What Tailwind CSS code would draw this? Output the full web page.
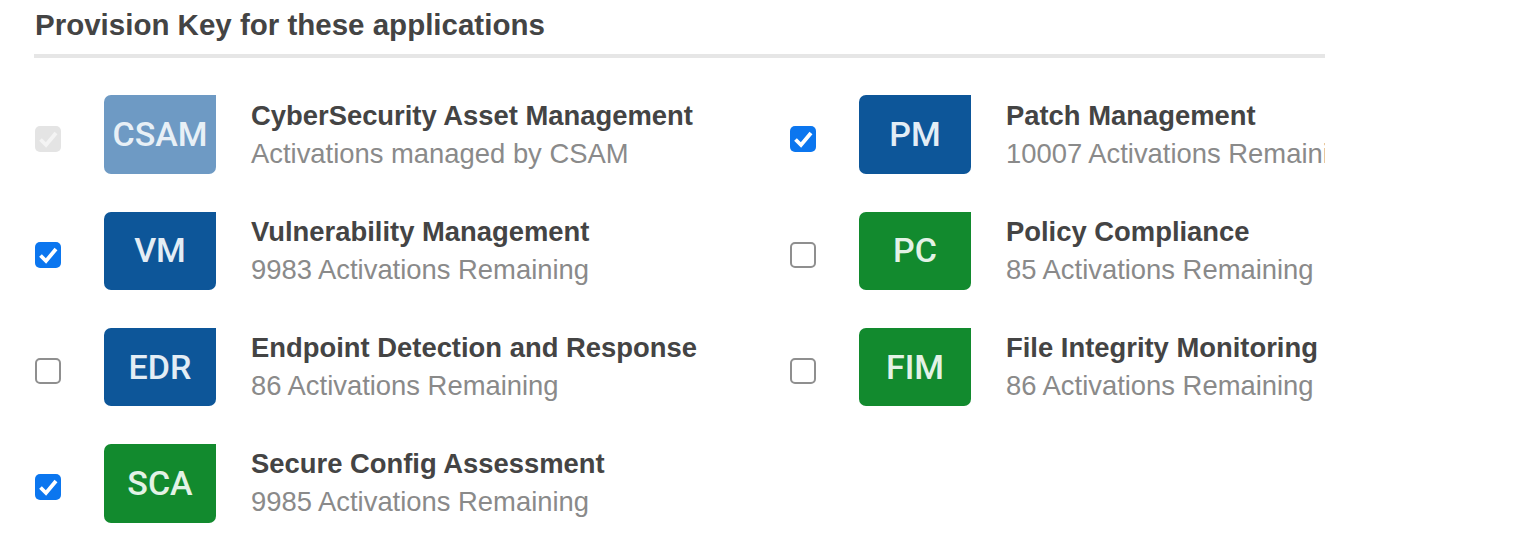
<!DOCTYPE html>
<html lang="en">
<head>
    <meta charset="UTF-8">
    <title>Provision Key</title>
    <script src="https://cdn.jsdelivr.net/npm/@tailwindcss/browser@4"></script>
</head>
<body class="bg-white font-['Liberation_Sans',sans-serif] h-[558px] overflow-hidden">
    <div class="w-[1291px] ml-[34px] overflow-hidden">
        <h2 class="pt-[7px] pl-px h-[54px] text-[29.5px] leading-[36px] font-bold text-[#444]">Provision Key for these applications</h2>
        <div class="h-1 bg-[#e6e6e6]"></div>

        <div class="grid grid-cols-[755px_536px] gap-y-[37.9px] mt-[37.35px]">
            <!-- CSAM -->
            <div class="flex items-center h-[78.4px]">
                <span class="w-[26px] h-[26px] ml-px mt-[8px] shrink-0 rounded-[5px] bg-[#e4e4e4]">
                    <svg viewBox="0 0 26 26" class="w-[26px] h-[26px]"><path d="M5.5 13.5l5.5 5.5L21 7" fill="none" stroke="#f4f4f4" stroke-width="3.8"/></svg>
                </span>
                <div class="ml-[43px] w-[112px] h-[78.4px] shrink-0 flex items-center justify-center rounded-[7px] rounded-tr-none bg-[#6e9ac4] text-[#e8f0f6] font-['Roboto',sans-serif] font-medium text-[34px]">CSAM</div>
                <div class="ml-[35px] whitespace-nowrap">
                    <div class="text-[27.4px] leading-[38px] font-bold text-[#444]">CyberSecurity Asset Management</div>
                    <div class="text-[27.4px] leading-[38px] text-[#8a8a8a]">Activations managed by CSAM</div>
                </div>
            </div>
            <!-- PM -->
            <div class="flex items-center h-[78.4px]">
                <span class="w-[26px] h-[26px] ml-px mt-[8px] shrink-0 rounded-[5px] bg-[#0b76ef]">
                    <svg viewBox="0 0 26 26" class="w-[26px] h-[26px]"><path d="M5.5 13.5l5.5 5.5L21 7" fill="none" stroke="#fff" stroke-width="3.8"/></svg>
                </span>
                <div class="ml-[43px] w-[112px] h-[78.4px] shrink-0 flex items-center justify-center rounded-[7px] rounded-tr-none bg-[#0d5699] text-[#e3edf5] font-['Roboto',sans-serif] font-medium text-[34px]">PM</div>
                <div class="ml-[35px] whitespace-nowrap">
                    <div class="text-[27.4px] leading-[38px] font-bold text-[#444]">Patch Management</div>
                    <div class="text-[27.4px] leading-[38px] text-[#8a8a8a]">10007 Activations Remaining</div>
                </div>
            </div>
            <!-- VM -->
            <div class="flex items-center h-[78.4px]">
                <span class="w-[26px] h-[26px] ml-px mt-[8px] shrink-0 rounded-[5px] bg-[#0b76ef]">
                    <svg viewBox="0 0 26 26" class="w-[26px] h-[26px]"><path d="M5.5 13.5l5.5 5.5L21 7" fill="none" stroke="#fff" stroke-width="3.8"/></svg>
                </span>
                <div class="ml-[43px] w-[112px] h-[78.4px] shrink-0 flex items-center justify-center rounded-[7px] rounded-tr-none bg-[#0d5699] text-[#e3edf5] font-['Roboto',sans-serif] font-medium text-[34px]">VM</div>
                <div class="ml-[35px] whitespace-nowrap">
                    <div class="text-[27.4px] leading-[38px] font-bold text-[#444]">Vulnerability Management</div>
                    <div class="text-[27.4px] leading-[38px] text-[#8a8a8a]">9983 Activations Remaining</div>
                </div>
            </div>
            <!-- PC -->
            <div class="flex items-center h-[78.4px]">
                <span class="w-[26px] h-[26px] ml-px mt-[8px] shrink-0 rounded-[5px] border-2 border-[#8f8f8f] bg-white"></span>
                <div class="ml-[43px] w-[112px] h-[78.4px] shrink-0 flex items-center justify-center rounded-[7px] rounded-tr-none bg-[#128a2e] text-[#e3f2e6] font-['Roboto',sans-serif] font-medium text-[34px]">PC</div>
                <div class="ml-[35px] whitespace-nowrap">
                    <div class="text-[27.4px] leading-[38px] font-bold text-[#444]">Policy Compliance</div>
                    <div class="text-[27.4px] leading-[38px] text-[#8a8a8a]">85 Activations Remaining</div>
                </div>
            </div>
            <!-- EDR -->
            <div class="flex items-center h-[78.4px]">
                <span class="w-[26px] h-[26px] ml-px mt-[8px] shrink-0 rounded-[5px] border-2 border-[#8f8f8f] bg-white"></span>
                <div class="ml-[43px] w-[112px] h-[78.4px] shrink-0 flex items-center justify-center rounded-[7px] rounded-tr-none bg-[#0d5699] text-[#e3edf5] font-['Roboto',sans-serif] font-medium text-[34px]">EDR</div>
                <div class="ml-[35px] whitespace-nowrap">
                    <div class="text-[27.4px] leading-[38px] font-bold text-[#444]">Endpoint Detection and Response</div>
                    <div class="text-[27.4px] leading-[38px] text-[#8a8a8a]">86 Activations Remaining</div>
                </div>
            </div>
            <!-- FIM -->
            <div class="flex items-center h-[78.4px]">
                <span class="w-[26px] h-[26px] ml-px mt-[8px] shrink-0 rounded-[5px] border-2 border-[#8f8f8f] bg-white"></span>
                <div class="ml-[43px] w-[112px] h-[78.4px] shrink-0 flex items-center justify-center rounded-[7px] rounded-tr-none bg-[#128a2e] text-[#e3f2e6] font-['Roboto',sans-serif] font-medium text-[34px]">FIM</div>
                <div class="ml-[35px] whitespace-nowrap">
                    <div class="text-[27.4px] leading-[38px] font-bold text-[#444]">File Integrity Monitoring</div>
                    <div class="text-[27.4px] leading-[38px] text-[#8a8a8a]">86 Activations Remaining</div>
                </div>
            </div>
            <!-- SCA -->
            <div class="flex items-center h-[78.4px]">
                <span class="w-[26px] h-[26px] ml-px mt-[8px] shrink-0 rounded-[5px] bg-[#0b76ef]">
                    <svg viewBox="0 0 26 26" class="w-[26px] h-[26px]"><path d="M5.5 13.5l5.5 5.5L21 7" fill="none" stroke="#fff" stroke-width="3.8"/></svg>
                </span>
                <div class="ml-[43px] w-[112px] h-[78.4px] shrink-0 flex items-center justify-center rounded-[7px] rounded-tr-none bg-[#128a2e] text-[#e3f2e6] font-['Roboto',sans-serif] font-medium text-[34px]">SCA</div>
                <div class="ml-[35px] whitespace-nowrap">
                    <div class="text-[27.4px] leading-[38px] font-bold text-[#444]">Secure Config Assessment</div>
                    <div class="text-[27.4px] leading-[38px] text-[#8a8a8a]">9985 Activations Remaining</div>
                </div>
            </div>
        </div>
    </div>
</body>
</html>
